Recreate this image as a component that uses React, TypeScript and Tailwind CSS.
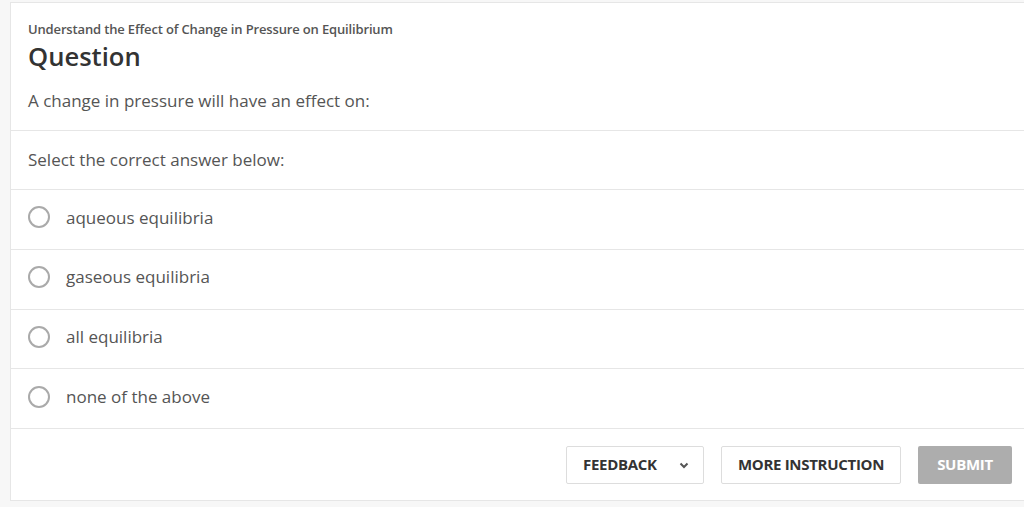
import React from "react";

const options = ["aqueous equilibria", "gaseous equilibria", "all equilibria", "none of the above"];

export default function App() {
  return (
    <div className="h-[507px] w-[1024px] overflow-hidden bg-[#f7f7f7] pt-[2px] pl-[10px] text-[#555]" style={{ fontFamily: '"Open Sans", sans-serif' }}>
      <div className="w-[1020px] border border-[#e6e6e6] bg-white">
        <div className="border-b border-[#e6e6e6] px-[17px] pt-[18px] pb-[17px]">
          <div className="text-[13px] font-semibold leading-[16px] tracking-[-0.15px] text-[#555]">
            Understand the Effect of Change in Pressure on Equilibrium
          </div>
          <div className="mt-[3px] text-[25.6px] font-semibold leading-[34px] text-[#333]">Question</div>
          <div className="mt-[15px] text-[17px] leading-[24px]">A change in pressure will have an effect on:</div>
        </div>
        <div className="flex h-[59px] items-center border-b border-[#e6e6e6] px-[17px] text-[17px]">
          Select the correct answer below:
        </div>
        {options.map((o) => (
          <div key={o} className="flex h-[59.75px] items-center gap-[16px] border-b border-[#e6e6e6] pb-[4px] pl-[17px] text-[17px]">
            <span className="h-[22px] w-[22px] rounded-full border-2 border-[#aaa] bg-white" />
            <span>{o}</span>
          </div>
        ))}
        <div className="flex h-[71px] items-center justify-end gap-[17px] pr-[17px]">
          <button className="flex h-[38px] w-[138px] items-center justify-between rounded-[2px] border border-[#ddd] bg-white pl-[16px] pr-[14px] text-[15px] font-bold tracking-[-0.3px] text-[#333]">
            FEEDBACK
            <svg width="10" height="7" viewBox="0 0 10 7" className="mt-[1px]">
              <path d="M1.5 1.5 L5 5 L8.5 1.5" fill="none" stroke="#555" strokeWidth="2" />
            </svg>
          </button>
          <button className="h-[38px] w-[180px] rounded-[2px] border border-[#ddd] bg-white text-[15px] font-bold tracking-[-0.3px] text-[#333]">
            MORE INSTRUCTION
          </button>
          <button className="h-[38px] w-[94px] rounded-[2px] bg-[#adadad] text-[15px] font-bold tracking-[-0.3px] text-white">
            SUBMIT
          </button>
        </div>
      </div>
    </div>
  );
}
